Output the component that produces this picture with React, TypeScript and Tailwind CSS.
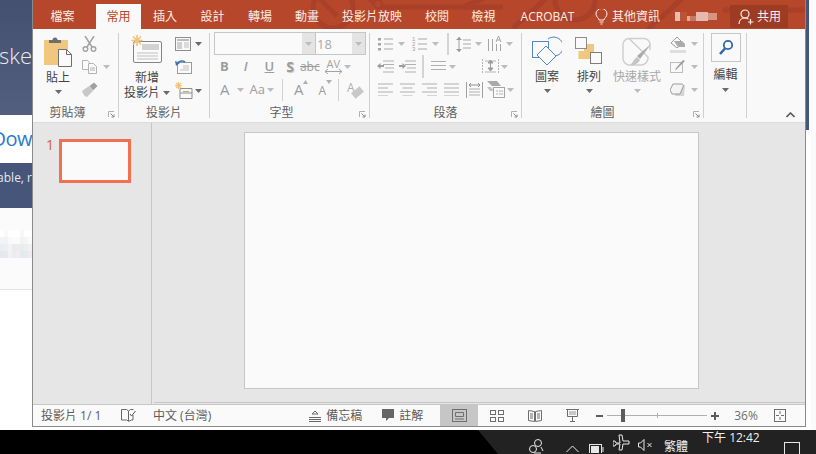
import React from "react";

const G = "#a9a9a9";

function Caret({ c = "#6a6a6a", className = "" }: { c?: string; className?: string }) {
  return (
    <svg width="7" height="4" viewBox="0 0 7 4" className={"shrink-0 " + className}>
      <polygon points="0,0 7,0 3.5,4" fill={c} />
    </svg>
  );
}
const GC = ({ className = "" }: { className?: string }) => <Caret c="#bcbcbc" className={className} />;

function Launcher() {
  return (
    <svg width="7" height="7" viewBox="0 0 7 7" className="absolute right-[3px] bottom-[0px]">
      <path d="M0.5 6V0.5H6" fill="none" stroke="#b0b0b0" />
      <path d="M2.5 2.5L6 6M6 3.5V6H3.5" fill="none" stroke="#8a8a8a" />
    </svg>
  );
}

function Group({ w, label, labelCls = "", children, launcher = true }: { w: string; label?: string; labelCls?: string; children: React.ReactNode; launcher?: boolean }) {
  return (
    <div className={"relative h-[85px] shrink-0 border-r border-[#d0d0d0] flex flex-col " + w}>
      <div className="h-[73px] shrink-0 flex">{children}</div>
      {label && <div className={"h-[14px] shrink-0 leading-[14px] text-center text-[12px] text-[#606060] " + labelCls}>{label}</div>}
      {launcher && <Launcher />}
    </div>
  );
}

function Lines({ w = 15, c = G, n = 3, gap = 4 }: { w?: number; c?: string; n?: number; gap?: number }) {
  return (
    <svg width={w} height={n * gap + 1} viewBox={`0 0 ${w} ${n * gap + 1}`}>
      {Array.from({ length: n }).map((_, i) => (
        <rect key={i} x="0" y={i * gap + 1} width={w} height="1" fill={c} />
      ))}
    </svg>
  );
}

const Paste = () => (
  <svg width="28" height="30" viewBox="0 0 28 30">
    <rect x="0" y="3" width="24" height="25" fill="#efc77e" />
    <path d="M5 6V3h3.5a2.5 2.5 0 0 1 5 0H17v3z" fill="#6e6e6e" />
    <path d="M14.5 12.5h8l5 5v12h-13z" fill="#fafafa" stroke="#6e6e6e" />
    <path d="M22.5 12.5v5h5" fill="none" stroke="#6e6e6e" />
  </svg>
);
const Scissors = () => (
  <svg width="15" height="16" viewBox="0 0 15 16" fill="none" stroke="#a3a3a3" strokeWidth="1.5">
    <path d="M3 0l7 11M12 0L5 11" />
    <circle cx="3.5" cy="13" r="2.3" />
    <circle cx="11.5" cy="13" r="2.3" />
  </svg>
);
const CopyI = () => (
  <svg width="15" height="14" viewBox="0 0 15 14" fill="#fafafa" stroke="#b2b2b2">
    <path d="M0.5 0.5h5l2 2v7h-7z" />
    <path d="M6.5 3.5h5l3 3v7h-8z" />
    <path d="M8 8h5M8 10h5" />
  </svg>
);
const Brush = () => (
  <svg width="16" height="15" viewBox="0 0 16 15">
    <path d="M0 9l7-5 4 5-6 6c-2 0-4-3-5-6z" fill="#c8c8c8" />
    <path d="M7.500 4L12 0.500 15.500 4 11 8.500z" fill="#a0a0a0" />
  </svg>
);
const NewSlide = () => (
  <svg width="32" height="28" viewBox="0 0 32 28">
    <rect x="2.5" y="6.5" width="28" height="21" rx="1.5" fill="#fafafa" stroke="#858585" />
    <rect x="11" y="9" width="17" height="6" fill="#d2d2d2" />
    <path d="M6 18h21M6 21h21M6 24h21" stroke="#bfbfbf" />
    <g stroke="#f0c27a" strokeWidth="1.6">
      <path d="M6 0v11M0.5 5.5h11M2 1.5l8 8M10 1.5l-8 8" />
    </g>
  </svg>
);
const LayoutI = () => (
  <svg width="16" height="14" viewBox="0 0 16 14" fill="none">
    <rect x="0.5" y="0.5" width="15" height="13" stroke="#8e8e8e" />
    <rect x="2" y="2" width="12" height="2" fill="#bdbdbd" />
    <rect x="2" y="5" width="5" height="7" fill="#d0d0d0" />
    <path d="M9 6h5M9 8h5M9 10h5" stroke="#bdbdbd" />
  </svg>
);
const ResetI = () => (
  <svg width="17" height="15" viewBox="0 0 17 15" fill="none">
    <rect x="2.5" y="3.5" width="14" height="11" fill="#fafafa" stroke="#9a9a9a" />
    <path d="M8 7h6M8 9h6M5 11h9" stroke="#c0c0c0" />
    <path d="M2 5a5 4 0 0 1 8-2" stroke="#3f73b5" strokeWidth="1.6" />
    <path d="M0 2l1 5 4-3z" fill="#3f73b5" />
  </svg>
);
const SectionI = () => (
  <svg width="18" height="17" viewBox="0 0 18 17" fill="none">
    <path d="M5 6.5h12v10H5zM5 11h12" stroke="#8e8e8e" />
    <rect x="8" y="9" width="6" height="1" fill="#d8a860" />
    <g stroke="#f0c27a" strokeWidth="1.2">
      <path d="M3.5 0v7M0 3.5h7M1 1l5 5M6 1l-5 5" />
    </g>
  </svg>
);

const Bullets = ({ nums = false }: { nums?: boolean }) => (
  <svg width="15" height="14" viewBox="0 0 15 14">
    {[1, 6, 11].map((y, i) =>
      nums ? (
        <text key={i} x="0" y={y + 3} fontSize="6" fill="#a0a0a0" fontFamily="Liberation Sans">{i + 1}</text>
      ) : (
        <rect key={i} x="0" y={y} width="3" height="2.5" fill="#a5a5a5" />
      )
    )}
    <path d="M6 2h9M6 7h9M6 12h9" stroke="#a9a9a9" />
  </svg>
);
const LineSp = () => (
  <svg width="15" height="17" viewBox="0 0 15 17" fill="none">
    <path d="M3 1v15" stroke="#a0a0a0" />
    <path d="M0 4l3-3 3 3z" fill="#9a9a9a" />
    <path d="M0 13l3 3 3-3z" fill="#9a9a9a" />
    <path d="M7 4h8M7 8h8M7 12h8" stroke="#a9a9a9" />
  </svg>
);
const TextDir = () => (
  <svg width="17" height="17" viewBox="0 0 17 17" fill="none" stroke="#a5a5a5">
    <path d="M1.5 3v12M5.5 3v12M9.5 8v7M13.5 8v7" />
    <path d="M9 6l2.5-6 2.500 6M10 4h3" />
  </svg>
);
const Indent = ({ out = false }: { out?: boolean }) => (
  <svg width="17" height="13" viewBox="0 0 17 13">
    <path d="M6 1h11M6 4.500h11M8 8h9M6 12h11" stroke="#b0b0b0" />
    {out ? <path d="M0 6l3.500-3v2H7v2H3.500v2z" fill="#9f9f9f" /> : <path d="M7 6L3.500 3v2H0v2h3.500v2z" fill="#9f9f9f" />}
  </svg>
);
const AlignText = () => (
  <svg width="17" height="17" viewBox="0 0 17 17" fill="none">
    <path d="M0.500 1v15M16.500 1v15" stroke="#b5b5b5" strokeDasharray="2 1" />
    <path d="M3 3h11M3 14h11" stroke="#b5b5b5" />
    <path d="M8.500 3v10M6 5l2.500-3L11 5zM6 10l2.500 3L11 10z" stroke="#9c9c9c" fill="#9c9c9c" />
  </svg>
);
const Align = ({ kind }: { kind: number }) => {
  const rows = [15, 10, 15, 10];
  const x = (w: number) => (kind === 0 || kind === 3 ? 0 : kind === 1 ? (15 - w) / 2 : 15 - w);
  return (
    <svg width="15" height="13" viewBox="0 0 15 13">
      {rows.map((r, i) => {
        const w = kind === 3 ? 15 : r;
        return <rect key={i} x={x(w)} y={i * 4 + 0.5} width={w} height="1" fill="#b0b0b0" />;
      })}
    </svg>
  );
};
const Distrib = () => (
  <svg width="17" height="16" viewBox="0 0 17 16" fill="none">
    <path d="M0.500 0v16M16.500 0v16" stroke="#a0a0a0" />
    <path d="M3 7h11M3 10h11M3 13h11" stroke="#b0b0b0" />
    <path d="M3 3h11M3 3l2-2M3 3l2 2M14 3l-2-2M14 3l-2 2" stroke="#8e8e8e" />
  </svg>
);
const Smart = () => (
  <svg width="18" height="17" viewBox="0 0 18 17" fill="none">
    <path d="M0 0h10l4 5H5z" fill="#a9a9a9" />
    <path d="M0 6h4l3 4H3z" fill="#c4c4c4" />
    <rect x="6.500" y="6.500" width="11" height="10" fill="#fafafa" stroke="#a5a5a5" />
    <path d="M9 10h2M12 10h4M9 13h2M12 13h4" stroke="#b5b5b5" />
  </svg>
);
const Shapes = () => (
  <svg width="30" height="30" viewBox="0 0 30 30" fill="none" stroke="#4f86c6">
    <rect x="0.500" y="5.500" width="16" height="16" />
    <path d="M16 3a9.500 9.500 0 1 1 7 17" />
    <path d="M14 10l10 10-9 9-10-10z" fill="#fafafa" />
  </svg>
);
const Arrange = () => (
  <svg width="28" height="27" viewBox="0 0 28 27">
    <rect x="3.500" y="14" width="14" height="8" fill="#efc77e" />
    <rect x="9" y="7" width="10" height="10" fill="#efc77e" />
    <rect x="0.500" y="0.500" width="11" height="11" fill="#fafafa" stroke="#8c8c8c" />
    <rect x="15.500" y="15.500" width="11" height="11" fill="#fafafa" stroke="#7e7e7e" />
  </svg>
);
const Quick = () => (
  <svg width="30" height="30" viewBox="0 0 30 30" fill="none">
    <path d="M7 1.500h15a6 6 0 0 1 6 6V13M26 20v1a7 7 0 0 1-7 7H8a7 7 0 0 1-7-6V8a6 6 0 0 1 6-6.500z" stroke="#cfcfcf" strokeWidth="1.500" />
    <path d="M29 7L18 22l-3-3z" fill="#ababab" />
    <path d="M15 20l3 3c-2 4-6 6-10 5 3-2 3-5 7-8z" fill="#c5c5c5" />
  </svg>
);
const Fill = () => (
  <svg width="16" height="17" viewBox="0 0 16 17">
    <path d="M1 7l6-6 6 6-6 5z" fill="#fafafa" stroke="#9c9c9c" />
    <path d="M4 5h8l3 3v3H8z" fill="#ababab" />
    <rect x="0" y="14" width="16" height="3" fill="#dedede" />
  </svg>
);
const Outline = () => (
  <svg width="16" height="13" viewBox="0 0 16 13" fill="none">
    <rect x="0.500" y="2.500" width="12" height="10" stroke="#bcbcbc" />
    <path d="M15 1L7 9l-2 2 1-3 7-8z" fill="#9f9f9f" />
  </svg>
);
const Effects = () => (
  <svg width="16" height="14" viewBox="0 0 16 14">
    <path d="M3 2h9l-1 11H2z" fill="#d4d4d4" transform="translate(3 0)" />
    <path d="M3 1h8c2 0 3 1 2 3l-3 7H2L0 7z" fill="#f4f4f4" stroke="#9a9a9a" />
  </svg>
);
const Mag = () => (
  <svg width="16" height="17" viewBox="0 0 16 17" fill="none">
    <circle cx="10" cy="6" r="4.200" stroke="#2f67ad" strokeWidth="1.800" />
    <path d="M7 9.500L2 15" stroke="#2f67ad" strokeWidth="2.600" />
  </svg>
);

const Tab = ({ w, t, active = false }: { w: string; t: string; active?: boolean }) => (
  <div
    className={
      "flex h-[25px] shrink-0 items-center justify-center self-end text-[12px] " +
      w +
      (active ? " bg-[#f9f9f9] text-[#b7472a]" : " text-[#fbeee9]")
    }
  >
    {t}
  </div>
);

const Bold = ({ t, cls = "" }: { t: string; cls?: string }) => (
  <span className={"text-[#9c9c9c] leading-none " + cls}>{t}</span>
);

const cells = [
  "#ffffff #f9f9f9 #ffffff #ffffff #ffffff #f8f8f8 #ffffff #ffffff".split(" "),
  "#f3f4f5 #f1f3f5 #f9f9f9 #fbfbfb #fbfbfb #f2f3f5 #f5f5f5 #fafafa".split(" "),
  "#ebedf0 #edeff1 #f3f3f3 #ebebeb #ececec #e9ecef #eeeeee #f1f1f1".split(" "),
  "#e4e9ed #e6e9ed #f1f1f1 #ebecee #eeeeee #e4e9ed #e6e9ed #ebedef".split(" "),
];

export default function App() {
  return (
    <div className="w-[816px] h-[454px] overflow-hidden bg-white flex flex-col [font-family:'Open_Sans','Noto_Sans_CJK_TC',sans-serif]">
      <div className="h-[430px] flex shrink-0">
        {/* desktop behind, left */}
        <div className="w-[32px] shrink-0 flex flex-col overflow-hidden bg-white">
          <div className="h-[115px] bg-gradient-to-b from-[#44506f] to-[#525f7e] flex items-center justify-end pb-[6px] text-[22px] font-light text-[#e9ecf2] leading-none">ske</div>
          <div className="h-[48px] flex items-center justify-end whitespace-nowrap text-[20px] text-[#2a7ad1] leading-none pr-[0px] -tracking-[0.5px]">Dow</div>
          <div className="h-[45px] bg-[#46557a] pt-[7px] whitespace-nowrap text-[12px] leading-[16px] text-[#e4e7ee] flex justify-end">able, r</div>
          <div className="h-[22px] bg-[#fbfbfb]" />
          <div className="h-[28px] flex flex-col">
            {cells.map((row, i) => (
              <div key={i} className="flex h-[7px]">
                {row.map((c, j) => (
                  <div key={j} className="w-[4px] h-[7px]" style={{ background: c }} />
                ))}
              </div>
            ))}
          </div>
          <div className="h-[32px] bg-[#fbfbfb] border-b border-[#e4e4e4]" />
        </div>

        {/* window */}
        <div className="w-[774px] h-[427px] shrink-0 border-x border-b border-[#8a8a8a] flex flex-col bg-[#e6e6e6] text-[#444]">
          {/* tabs */}
          <div className="relative h-[29px] shrink-0 bg-[#b7472a] flex overflow-hidden">
            <svg width="772" height="29" viewBox="0 0 772 29" className="absolute left-0 top-0" fill="none" stroke="#a8402a" strokeWidth="5">
              <circle cx="300" cy="8" r="20" />
              <path d="M286 -2L304 16" />
              <path d="M335 -3L345 7H470" />
              <circle cx="345" cy="4" r="4" fill="#b7472a" strokeWidth="2" />
              <path d="M430 7L455 -4M480 28L515 -3" />
              <circle cx="542" cy="0" r="20" />
              <path d="M650 -2L615 29M690 10H772" />
            </svg>
            <div className="relative flex h-[29px] w-full">
              <Tab w="w-[59px] pr-[0px]" t="檔案" />
              <div className="w-[4px]" />
              <Tab w="w-[45px]" t="常用" active />
              <Tab w="w-[48px]" t="插入" />
              <Tab w="w-[47px]" t="設計" />
              <Tab w="w-[48px]" t="轉場" />
              <Tab w="w-[46px]" t="動畫" />
              <Tab w="w-[84px]" t="投影片放映" />
              <Tab w="w-[46px]" t="校閱" />
              <Tab w="w-[47px]" t="檢視" />
              <Tab w="w-[81px]" t="ACROBAT" />
              <div className="flex h-[25px] self-end items-center ml-[7px] text-[12px] text-[#fbeee9]">
                <svg width="13" height="16" viewBox="0 0 13 16" fill="none" stroke="#fbeee9">
                  <path d="M4 11c0-2-3-3-3-6a5.500 5.500 0 0 1 11 0c0 3-3 4-3 6zM4.500 13h4M5.500 15h2" />
                </svg>
                <span className="ml-[4px]">其他資訊</span>
              </div>
              <div className="flex self-end h-[25px] items-center ml-[15px] w-[46px]">
                <div className="flex items-center h-[10px] -mt-[1px]">
                  <div className="w-[5px] h-[9px] bg-[#e7bfb2]" />
                  <div className="w-[7px] h-[9px] bg-[#bb5337]" />
                  <div className="w-[3px] h-[5px] mt-[4px] bg-[#e0a998]" />
                  <div className="w-[6px] h-[5px] mt-[4px] bg-[#c8765f]" />
                  <div className="w-[12px] h-[9px] bg-[#e5b9ab]" />
                  <div className="w-[9px] h-[7px] bg-[#d69581]" />
                </div>
              </div>
              <div className="self-start mt-[5px] ml-[9px] h-[23px] w-[58px] bg-[#9e3b23] flex items-center pl-[8px] text-[12px] text-[#fbeee9]">
                <svg width="16" height="16" viewBox="0 0 16 16" fill="none" stroke="#fbeee9" strokeWidth="1.200">
                  <circle cx="7" cy="5" r="4" />
                  <path d="M1 15c0-4 3-6 6-6 1.500 0 2.500.5 3.500 1M12.500 10v5.500M10 13h5.500" />
                </svg>
                <span className="ml-[3px]">共用</span>
              </div>
            </div>
          </div>

          {/* ribbon */}
          <div className="h-[93px] shrink-0 bg-[#f9f9f9] pt-[4px] flex text-[12px] leading-[14px] relative">
            <Group w="w-[86px]" label="剪貼簿" labelCls="pr-[16px]">
              <div className="ml-[10px] w-[30px] flex flex-col items-center pt-[4px]">
                <Paste />
                <div className="mt-[4px] text-[#444]">貼上</div>
                <Caret className="mt-[5px]" />
              </div>
              <div className="ml-[9px] flex flex-col">
                <div className="h-[22px] flex items-center"><Scissors /></div>
                <div className="h-[23px] flex items-center"><CopyI /><GC className="ml-[6px]" /></div>
                <div className="h-[23px] flex items-center"><Brush /></div>
              </div>
            </Group>

            <Group w="w-[91px]" label="投影片" launcher={false}>
              <div className="ml-[5px] w-[46px] flex flex-col items-center pt-[2px]">
                <NewSlide />
                <div className="mt-[8px]">新增</div>
                <div className="mt-[1px] flex items-center whitespace-nowrap">投影片<Caret className="ml-[3px]" /></div>
              </div>
              <div className="ml-[5px] flex flex-col">
                <div className="h-[22px] flex items-center"><LayoutI /><Caret className="ml-[4px]" /></div>
                <div className="h-[23px] flex items-center"><ResetI /><div className="w-[7px]" /></div>
                <div className="h-[25px] flex items-center"><SectionI /><Caret className="ml-[2px]" /></div>
              </div>
            </Group>

            <Group w="w-[160px]" label="字型" labelCls="pr-[16px]">
              <div className="ml-[4px] w-[152px] flex flex-col">
                <div className="-mt-[1px] h-[23px] shrink-0 border border-[#c6c6c6] bg-[#fafafa] flex">
                  <div className="w-[87px]" />
                  <div className="w-[13px] bg-[#e4e4e4] flex items-center justify-center"><GC /></div>
                  <div className="w-[1px] bg-[#c6c6c6]" />
                  <div className="w-[36px] pl-[1px] flex items-center text-[13px] text-[#a8a8a8]">18</div>
                  <div className="flex-1 bg-[#e4e4e4] flex items-center justify-center"><GC /></div>
                </div>
                <div className="h-[23px] flex items-center text-[13px]">
                  <Bold t="B" cls="ml-[6px] font-bold" />
                  <Bold t="I" cls="ml-[15px] italic font-semibold" />
                  <Bold t="U" cls="ml-[17px] underline font-semibold" />
                  <Bold t="S" cls="ml-[12px] font-bold text-[14px] [text-shadow:1px_1px_1px_#c8c8c8]" />
                  <Bold t="abc" cls="ml-[6px] line-through text-[12px]" />
                  <div className="ml-[5px] flex flex-col items-center w-[17px]">
                    <span className="text-[11px] leading-[10px] text-[#a3a3a3]">AV</span>
                    <svg width="17" height="5" viewBox="0 0 17 5" fill="none" stroke="#a3a3a3"><path d="M0 2.500h17M3 0L0 2.500 3 5M14 0l3 2.500L14 5" /></svg>
                  </div>
                  <GC className="ml-[2px]" />
                </div>
                <div className="h-[23px] flex items-center">
                  <Bold t="A" cls="ml-[6px] text-[15px]" />
                  <GC className="ml-[7px]" />
                  <Bold t="Aa" cls="ml-[6px] text-[13px]" />
                  <GC className="ml-[2px]" />
                  <div className="ml-[8px] w-px h-[22px] bg-[#d0d0d0]" />
                  <Bold t="A" cls="ml-[11px] text-[15px]" />
                  <svg width="5" height="10" viewBox="0 0 5 10" className="self-start mt-[2px]"><polygon points="0,4 5,4 2.500,0" fill="#b0b0b0" /></svg>
                  <Bold t="A" cls="ml-[10px] text-[12px] mt-[2px]" />
                  <svg width="6" height="10" viewBox="0 0 6 10" className="self-start mt-[2px]"><polygon points="0,0 6,0 3,4" fill="#b0b0b0" /></svg>
                  <div className="ml-[6px] w-px h-[22px] bg-[#d0d0d0]" />
                  <div className="relative ml-[8px] w-[15px] h-[16px]">
                    <span className="block text-[12px] leading-[12px] text-[#b0b0b0]">A</span>
                    <div className="absolute left-[5px] top-[7px] w-[11px] h-[7px] bg-[#c8c8c8] rotate-[-40deg]" />
                  </div>
                </div>
              </div>
            </Group>

            <Group w="w-[152px]" label="段落">
              <div className="ml-[8px] flex flex-col">
                <div className="h-[22px] flex items-center">
                  <Bullets /><GC className="ml-[5px]" />
                  <div className="ml-[7px]"><Bullets nums /></div><GC className="ml-[5px]" />
                  <div className="ml-[8px] w-[2px] h-[22px] bg-[#d4d4d4]" />
                  <div className="ml-[7px]"><LineSp /></div><GC className="ml-[4px]" />
                  <div className="ml-[5px]"><TextDir /></div><GC className="ml-[2px]" />
                </div>
                <div className="h-[23px] flex items-center">
                  <div className="-ml-[1px]"><Indent out /></div>
                  <div className="ml-[5px]"><Indent /></div>
                  <div className="ml-[6px] w-[2px] h-[23px] bg-[#d4d4d4]" />
                  <div className="ml-[7px]"><Lines w={15} c="#b0b0b0" /></div><GC className="ml-[3px]" />
                  <div className="ml-[26px]"><AlignText /></div><GC className="ml-[2px]" />
                </div>
                <div className="h-[23px] flex items-center">
                  <Align kind={0} />
                  <div className="ml-[7px]"><Align kind={1} /></div>
                  <div className="ml-[7px]"><Align kind={2} /></div>
                  <div className="ml-[7px]"><Align kind={3} /></div>
                  <div className="ml-[7px]"><Distrib /></div>
                  <div className="ml-[4px]"><Smart /></div><GC className="ml-[2px]" />
                </div>
              </div>
            </Group>

            <Group w="w-[182px]" label="繪圖" labelCls="pr-[20px]">
              <div className="ml-[8px] w-[34px] flex flex-col items-center pt-[3px]">
                <Shapes />
                <div className="mt-[4px]">圖案</div>
                <Caret className="mt-[5px]" />
              </div>
              <div className="ml-[8px] w-[34px] flex flex-col items-center pt-[4px]">
                <Arrange />
                <div className="mt-[6px]">排列</div>
                <Caret className="mt-[5px]" />
              </div>
              <div className="ml-[6px] w-[50px] flex flex-col items-center pt-[4px]">
                <Quick />
                <div className="mt-[3px] text-[#a8a8a8] whitespace-nowrap">快速樣式</div>
                <GC className="mt-[5px]" />
              </div>
              <div className="ml-[8px] flex flex-col">
                <div className="h-[22px] flex items-center"><Fill /><GC className="ml-[5px]" /></div>
                <div className="h-[23px] flex items-center"><Outline /><GC className="ml-[5px]" /></div>
                <div className="h-[23px] flex items-center"><Effects /><GC className="ml-[5px]" /></div>
              </div>
            </Group>

            <Group w="w-[43px]" launcher={false}>
              <div className="w-[42px] flex flex-col items-center pl-[1px]">
                <div className="w-[30px] h-[29px] border border-[#c6c6c6] flex items-center justify-center"><Mag /></div>
                <div className="mt-[6px]">編輯</div>
                <Caret className="mt-[6px]" />
              </div>
            </Group>

            <div className="flex-1 flex justify-end items-end pb-[4px] pr-[10px]">
              <svg width="9" height="6" viewBox="0 0 9 6" fill="none" stroke="#5a5a5a" strokeWidth="1.600"><path d="M0.500 5L4.500 1l4 4" /></svg>
            </div>
          </div>

          {/* workspace */}
          <div className="h-[282px] shrink-0 flex border-t border-[#dcdcdc]">
            <div className="w-[119px] shrink-0 border-r border-[#c6c6c6] flex pt-[16px]">
              <div className="ml-[13px] w-[13px] -mt-[1px] text-[14px] leading-[14px] text-[#d2603f]">1</div>
              <div className="w-[72px] h-[44px] border-[3px] border-[#f26f52] bg-[#fafafa]" />
            </div>
            <div className="flex-1 flex flex-col">
              <div className="ml-[92px] mt-[9px] w-[455px] h-[257px] bg-[#fafafa] border border-[#c6c6c6]" />
              <div className="ml-[2px] mt-[13px] h-px bg-[#c6c6c6]" />
            </div>
          </div>

          {/* status */}
          <div className="flex-1 border-t border-[#c6c6c6] bg-[#fafafa] flex items-center text-[12px] text-[#5c5c5c]">
            <span className="ml-[8px] w-[80px] whitespace-nowrap">投影片 1/ 1</span>
            <svg width="15" height="13" viewBox="0 0 15 13" fill="none" stroke="#666"><path d="M0.500 0.500h5l2 1.500 0 10-2-1h-5zM7.500 2l2-1.500h3M12 6v5l-1.500 0-3 1.500" /><path d="M9 5l1.500 2 4-5" stroke="#555" /></svg>
            <span className="ml-[17px] whitespace-nowrap">中文 (台灣)</span>
            <svg width="12" height="12" viewBox="0 0 12 12" className="ml-[98px]" fill="none" stroke="#666"><path d="M3 4l3-3 3 3zM0 7.500h12M0 9.500h12M0 11.500h12" /></svg>
            <span className="ml-[5px] whitespace-nowrap">備忘稿</span>
            <svg width="13" height="13" viewBox="0 0 13 13" className="ml-[20px]"><path d="M0 0h12v9H7l-3 3V9H0z" fill="#666" /></svg>
            <span className="ml-[4px] whitespace-nowrap">註解</span>
            <div className="ml-[17px] w-[38px] h-full bg-[#c6c6c6] flex items-center justify-center">
              <svg width="15" height="13" viewBox="0 0 15 13" fill="none" stroke="#6e6e6e"><rect x="0.500" y="0.500" width="14" height="12" /><path d="M3.500 3.500h8v4h-8zM3 10h9" /></svg>
            </div>
            <svg width="14" height="12" viewBox="0 0 14 12" className="ml-[12px]" fill="none" stroke="#6e6e6e"><rect x="0.500" y="0.500" width="5" height="4" /><rect x="8.500" y="0.500" width="5" height="4" /><rect x="0.500" y="7.500" width="5" height="4" /><rect x="8.500" y="7.500" width="5" height="4" /></svg>
            <svg width="14" height="13" viewBox="0 0 14 13" className="ml-[24px]" fill="none" stroke="#6e6e6e"><path d="M0.500 1.500l6 1v10l-6-1zM13.500 1.500l-6 1v10l6-1zM2 5h3M2 7h3M2 9h3M9 5h3M9 7h3M9 9h3" /></svg>
            <svg width="13" height="13" viewBox="0 0 13 13" className="ml-[24px]" fill="none" stroke="#6e6e6e"><path d="M0 0.500h13M1.500 1v6.500h10V1M6.500 7.500V12M4 12.500h5" /><rect x="3" y="2" width="7" height="4" fill="#c8c8c8" stroke="none" /></svg>
            <div className="ml-[17px] w-[7px] h-[2px] bg-[#5c5c5c]" />
            <div className="relative ml-[4px] w-[100px] h-[13px] flex items-center">
              <div className="w-full h-px bg-[#b0b0b0]" />
              <div className="absolute left-[50px] top-[4px] w-px h-[5px] bg-[#b0b0b0]" />
              <div className="absolute left-[14px] top-0 w-[4px] h-[13px] bg-[#5c5c5c]" />
            </div>
            <svg width="8" height="8" viewBox="0 0 8 8" className="ml-[4px]"><path d="M3 0h2v3h3v2H5v3H3V5H0V3h3z" fill="#5c5c5c" /></svg>
            <span className="ml-[15px] whitespace-nowrap text-[#6e6e6e]">36%</span>
            <svg width="12" height="13" viewBox="0 0 12 13" className="ml-[16px]" fill="none" stroke="#6e6e6e"><rect x="0.500" y="0.500" width="11" height="12" /><path d="M6 2v3M6 8v3M2 6.500h3M7 6.500h3" /></svg>
          </div>
        </div>

        {/* desktop behind, right */}
        <div className="flex-1 flex flex-col">
          <div className="h-[130px] flex">
            <div className="w-[3px] bg-[#46557a]" />
            <div className="flex-1 bg-[#fbfbfb]" />
          </div>
          <div className="flex-1 bg-[#fafafa] border-l-[5px] border-[#ffffff]" />
        </div>
      </div>

      {/* taskbar */}
      <div className="h-[24px] shrink-0 bg-black relative overflow-hidden text-[#f0f0f0] text-[12px]">
        <div className="h-full w-full bg-[#222222] [clip-path:polygon(478px_0,816px_0,816px_24px,498px_24px)] flex">
          <svg width="15" height="16" viewBox="0 0 15 16" className="ml-[529px] mt-[8px]" fill="none" stroke="#e8e8e8"><circle cx="9" cy="5" r="3.500" /><circle cx="4" cy="11" r="3.500" /><path d="M5 15h7M12 9l2 4" /></svg>
          <svg width="13" height="8" viewBox="0 0 13 8" className="ml-[22px] mt-[15px]" fill="none" stroke="#e8e8e8"><path d="M0.500 7L6.500 1l6 6" /></svg>
          <svg width="15" height="9" viewBox="0 0 15 9" className="ml-[10px] mt-[14px]" fill="none" stroke="#e8e8e8"><rect x="0.500" y="0.500" width="12" height="10" /><rect x="2" y="2" width="8" height="8" fill="#e8e8e8" stroke="none" /><path d="M14 3v5" /></svg>
          <svg width="17" height="18" viewBox="0 0 17 18" className="ml-[9px] mt-[4px]" fill="none" stroke="#e8e8e8"><path d="M6 1h3l1 6h6v3h-6l-1 6H6l1-6H3l-1 2H0V7h2l1 2h4z" /></svg>
          <svg width="15" height="12" viewBox="0 0 15 12" className="ml-[8px] mt-[9px]" fill="none" stroke="#e8e8e8"><path d="M0.500 4h2L6 0.500v11L2.500 8h-2zM9.500 4l4 4M13.500 4l-4 4" /></svg>
          <span className="ml-[11px] mt-[10px] leading-[14px] whitespace-nowrap">繁體</span>
          <span className="ml-[14px] -mt-[2px] leading-[20px] text-[12px] whitespace-nowrap">下午 12:42</span>
          <div className="ml-[24px] mt-[12px] w-[16px] h-[16px] border border-[#e8e8e8]" />
        </div>
      </div>
    </div>
  );
}
